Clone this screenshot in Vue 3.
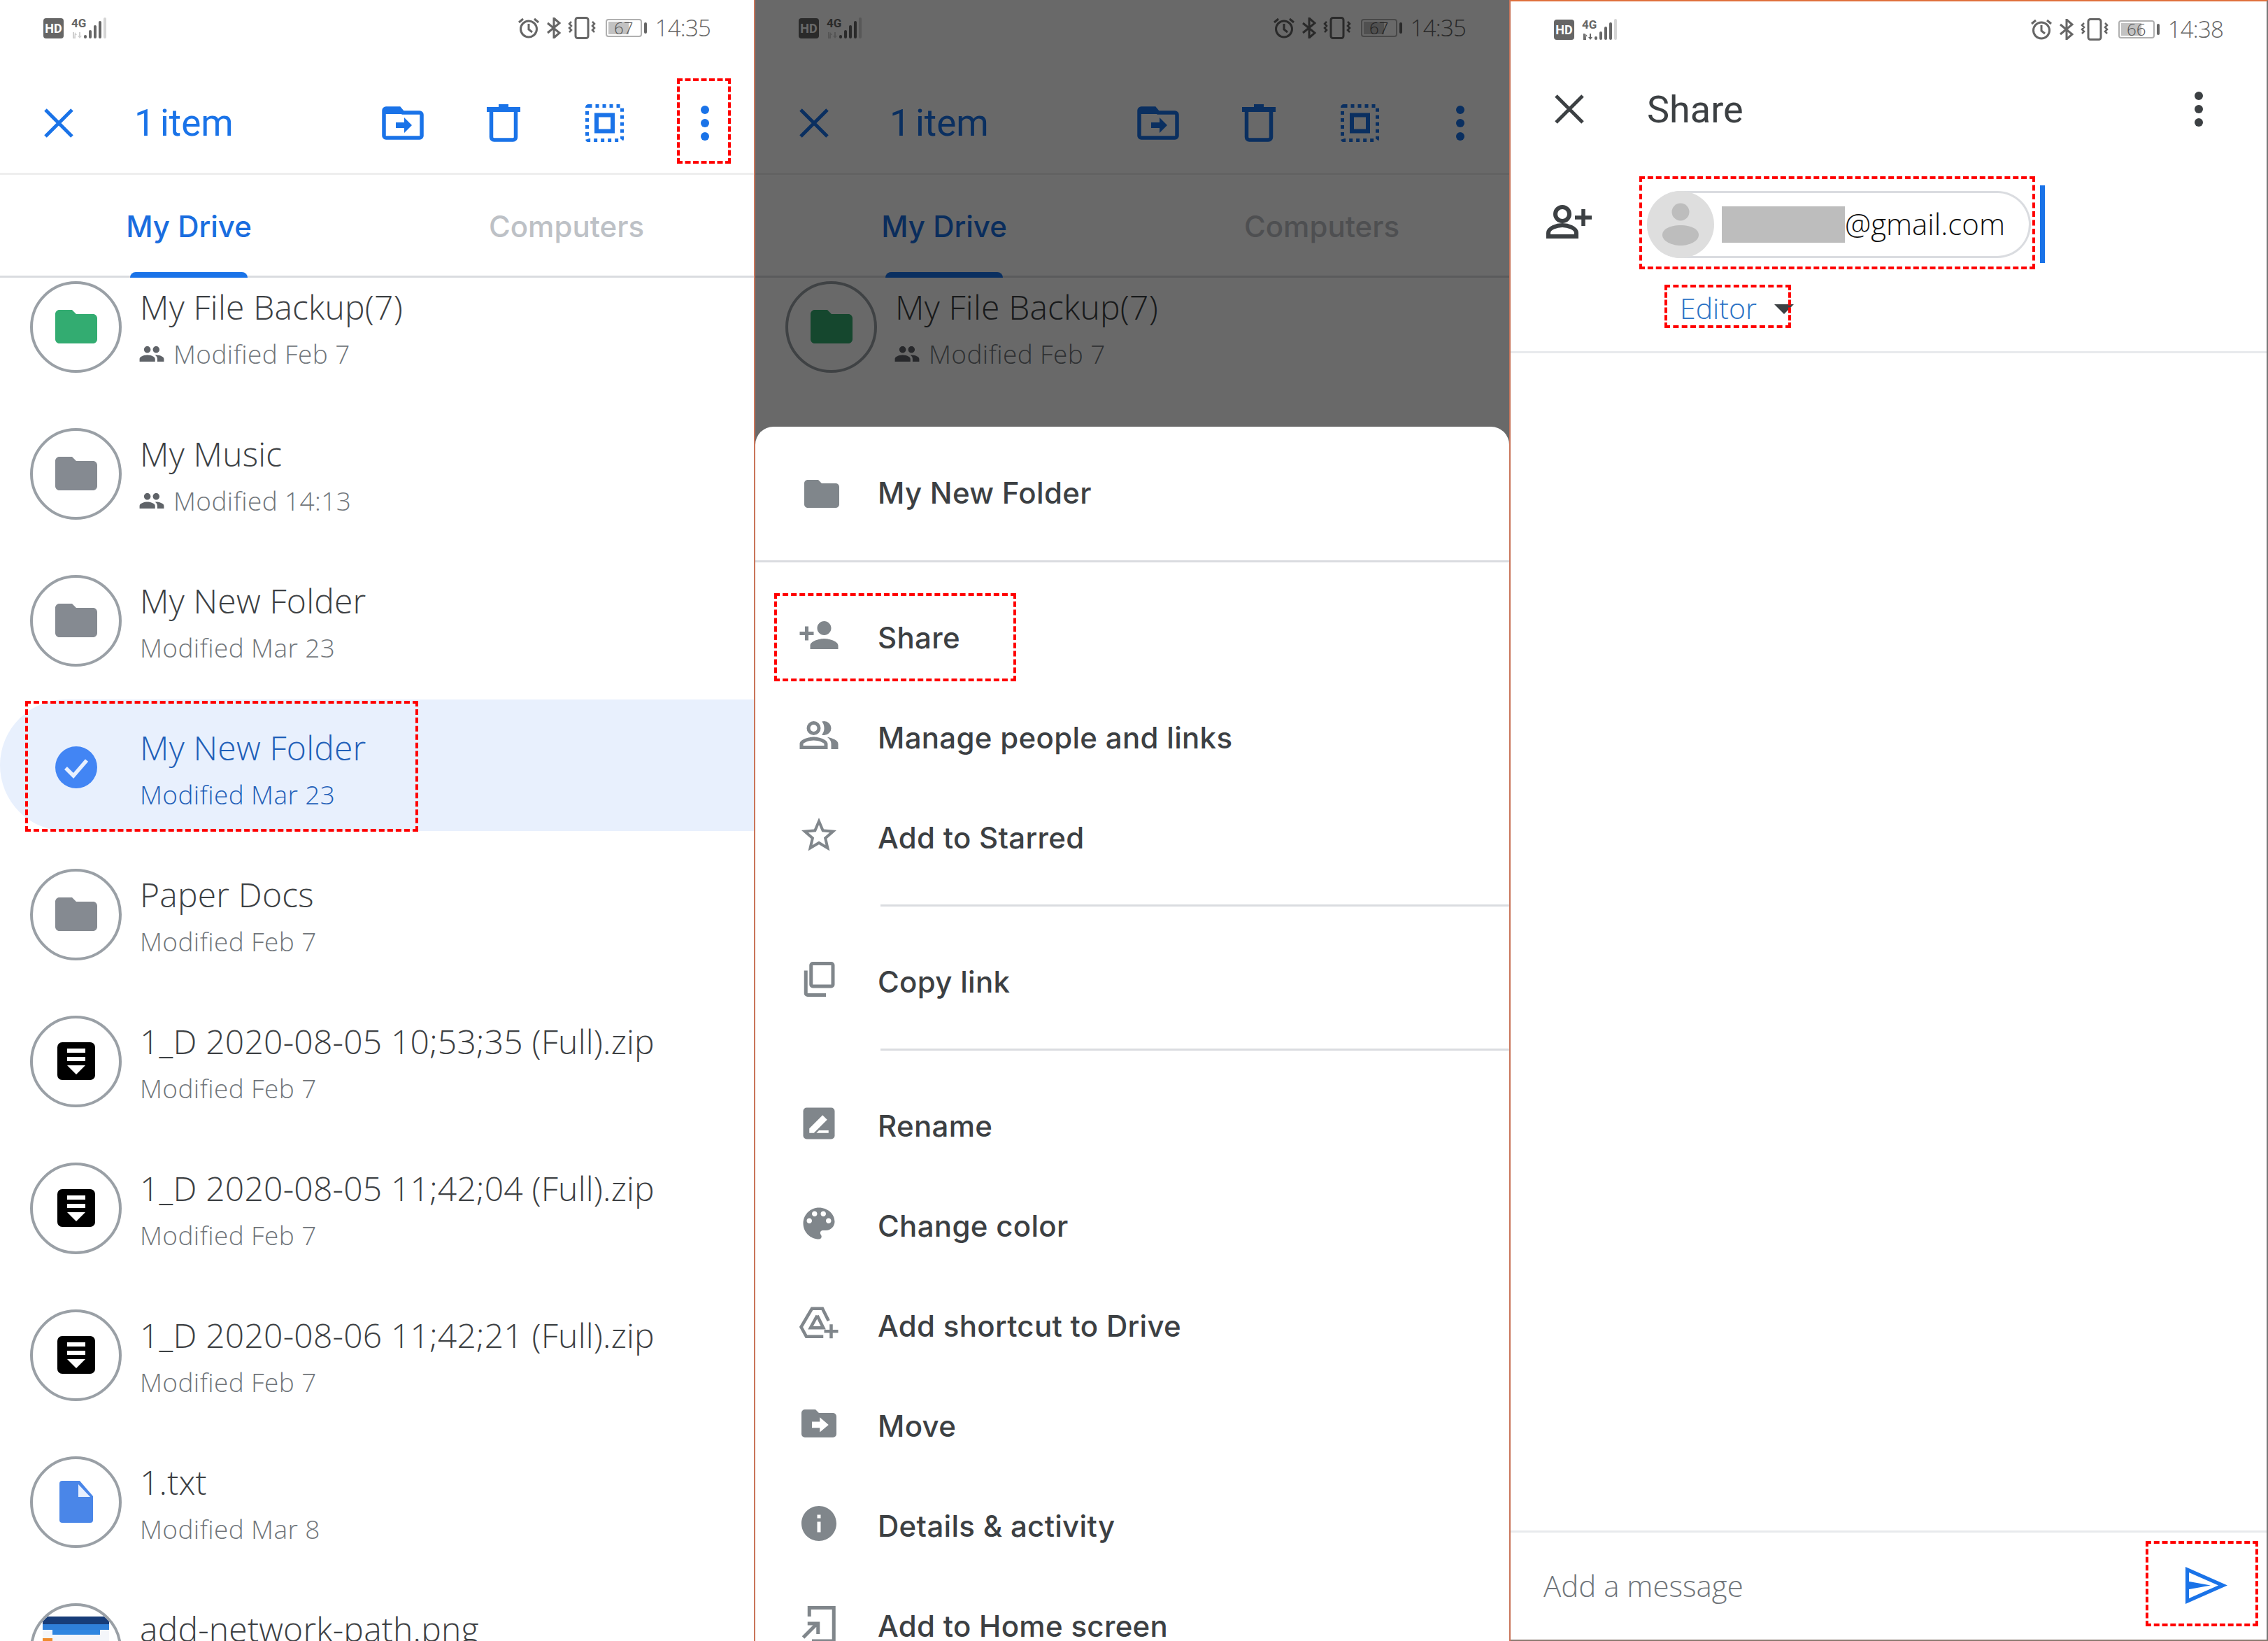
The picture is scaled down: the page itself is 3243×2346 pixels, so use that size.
<script setup>
const panels = [
  { id: 'drive', kind: 'drive', battery: 67, time: '14:35', arrows: '#cfcfcf' },
  { id: 'menu', kind: 'drive', battery: 67, time: '14:35', arrows: '#cfcfcf' },
  { id: 'share', kind: 'share', battery: 66, time: '14:38', arrows: '#666' },
]

const files = [
  { name: 'My File Backup(7)', sub: 'Modified Feb 7', icon: 'folder', tint: 'green', shared: true },
  { name: 'My Music', sub: 'Modified 14:13', icon: 'folder', tint: 'grey', shared: true },
  { name: 'My New Folder', sub: 'Modified Mar 23', icon: 'folder', tint: 'grey' },
  { name: 'My New Folder', sub: 'Modified Mar 23', icon: 'check', selected: true },
  { name: 'Paper Docs', sub: 'Modified Feb 7', icon: 'folder', tint: 'grey' },
  { name: '1_D 2020-08-05 10;53;35 (Full).zip', sub: 'Modified Feb 7', icon: 'zip' },
  { name: '1_D 2020-08-05 11;42;04 (Full).zip', sub: 'Modified Feb 7', icon: 'zip' },
  { name: '1_D 2020-08-06 11;42;21 (Full).zip', sub: 'Modified Feb 7', icon: 'zip' },
  { name: '1.txt', sub: 'Modified Mar 8', icon: 'doc' },
  { name: 'add-network-path.png', sub: '', icon: 'thumb' },
]

const menuGroups = [
  [
    { label: 'Share', icon: 'person-add' },
    { label: 'Manage people and links', icon: 'people' },
    { label: 'Add to Starred', icon: 'star' },
  ],
  [{ label: 'Copy link', icon: 'copy' }],
  [
    { label: 'Rename', icon: 'rename' },
    { label: 'Change color', icon: 'palette' },
    { label: 'Add shortcut to Drive', icon: 'shortcut' },
    { label: 'Move', icon: 'move' },
    { label: 'Details & activity', icon: 'info' },
    { label: 'Add to Home screen', icon: 'home' },
  ],
]

// the sheet covers everything below the first row on the middle panel
const rowsFor = (panel) => (panel.id === 'menu' ? files.slice(0, 1) : files)
</script>

<template>
  <svg class="sprite" aria-hidden="true">
    <symbol id="i-folder" viewBox="0 0 24 24">
      <path fill="currentColor" d="M10 4H4c-1.1 0-2 .9-2 2v12c0 1.1.9 2 2 2h16c1.1 0 2-.9 2-2V8c0-1.100-.9-2-2-2h-8l-2-2z" />
    </symbol>
    <symbol id="i-people-solid" viewBox="0 0 24 24">
      <path fill="currentColor" d="M16 11c1.66 0 2.99-1.34 2.99-3S17.66 5 16 5c-1.66 0-3 1.34-3 3s1.34 3 3 3zm-8 0c1.66 0 2.99-1.34 2.99-3S9.66 5 8 5C6.34 5 5 6.34 5 8s1.34 3 3 3zm0 2c-2.33 0-7 1.17-7 3.5V19h14v-2.5c0-2.33-4.67-3.5-7-3.5zm8 0c-.29 0-.62.02-.97.05 1.16.84 1.97 1.97 1.97 3.45V19h6v-2.5c0-2.33-4.67-3.5-7-3.5z" />
    </symbol>
    <symbol id="i-person-add" viewBox="0 0 24 24">
      <path fill="currentColor" d="M15 12c2.21 0 4-1.79 4-4s-1.79-4-4-4-4 1.79-4 4 1.79 4 4 4zm-9-2V7H4v3H1v2h3v3h2v-3h3v-2H6zm9 4c-2.67 0-8 1.34-8 4v2h16v-2c0-2.66-5.33-4-8-4z" />
    </symbol>
    <symbol id="i-people" viewBox="0 0 24 24">
      <path fill="currentColor" fill-rule="evenodd" d="M9 13c-2.67 0-8 1.34-8 4v3h16v-3c0-2.66-5.33-4-8-4zm6 5H3v-1c.2-.72 3.3-2 6-2s5.8 1.28 6 2v1zM9 12a4 4 0 1 0 0-8 4 4 0 0 0 0 8zm0-6a2 2 0 1 1 0 4 2 2 0 0 1 0-4zm6 6a4 4 0 0 0 0-8c-.47 0-.91.08-1.33.23a5.98 5.98 0 0 1 0 7.54c.42.15.86.23 1.33.23zm1.7 1.13C18.1 14.1 19 15.4 19 17v3h4v-3c0-2.2-3.6-3.4-6.3-3.87z" />
    </symbol>
    <symbol id="i-star" viewBox="0 0 24 24">
      <path fill="currentColor" d="M22 9.24l-7.19-.62L12 2 9.19 8.63 2 9.24l5.46 4.73L5.82 21 12 17.27 18.18 21l-1.63-7.03L22 9.24zM12 15.4l-3.76 2.27 1-4.28-3.32-2.88 4.38-.38L12 6.1l1.71 4.04 4.38.38-3.32 2.88 1 4.28L12 15.4z" />
    </symbol>
    <symbol id="i-copy" viewBox="0 0 24 24">
      <path fill="currentColor" fill-rule="evenodd" d="M8.5 2H19a2 2 0 0 1 2 2v11a2 2 0 0 1-2 2H8.500a2 2 0 0 1-2-2V4a2 2 0 0 1 2-2zm0 2v11H19V4H8.500zM3.500 7h2v13H16v2H5.500a2 2 0 0 1-2-2V7z" />
    </symbol>
    <symbol id="i-rename" viewBox="0 0 24 24">
      <path fill="currentColor" d="M19 3H5a2 2 0 0 0-2 2v14a2 2 0 0 0 2 2h14a2 2 0 0 0 2-2V5a2 2 0 0 0-2-2z" />
      <path fill="#fff" d="M6.500 17.500v-2.600l7.600-7.600 2.600 2.600-7.600 7.600H6.500zM12 16h5.500v1.500H10.500z" />
    </symbol>
    <symbol id="i-palette" viewBox="0 0 24 24">
      <path fill="currentColor" d="M12 3c-4.97 0-9 4.030-9 9s4.030 9 9 9c.83 0 1.500-.67 1.500-1.500 0-.39-.15-.74-.39-1.010-.23-.26-.38-.61-.38-.99 0-.83.67-1.500 1.500-1.500H16c2.760 0 5-2.240 5-5 0-4.420-4.030-8-9-8zm-5.500 9c-.83 0-1.500-.67-1.500-1.500S5.670 9 6.500 9 8 9.670 8 10.500 7.330 12 6.500 12zm3-4C8.670 8 8 7.330 8 6.500S8.670 5 9.500 5s1.500.67 1.500 1.500S10.330 8 9.500 8zm5 0c-.83 0-1.500-.67-1.500-1.500S13.670 5 14.500 5s1.500.67 1.500 1.500S15.330 8 14.500 8zm3 4c-.83 0-1.500-.67-1.500-1.500S16.670 9 17.500 9s1.500.67 1.500 1.500-.67 1.500-1.500 1.500z" />
    </symbol>
    <symbol id="i-shortcut" viewBox="0 0 24 24">
      <path fill="none" stroke="currentColor" stroke-width="1.800" d="M17.500 10.500 14 3.500H8L1.800 14l3 5.500H14.500M11 7.500 7.200 14.500H14.500L11 7.500M19 12.500v8M15 16.500h8" />
    </symbol>
    <symbol id="i-move" viewBox="0 0 24 24">
      <path fill="currentColor" d="M10 4H4a2 2 0 0 0-2 2v12a2 2 0 0 0 2 2h16a2 2 0 0 0 2-2V8a2 2 0 0 0-2-2h-8l-2-2z" />
      <path fill="#fff" d="M12.500 17v-2.500H8v-3.500h4.500V8.500l5 4.250z" />
    </symbol>
    <symbol id="i-info" viewBox="0 0 24 24">
      <path fill="currentColor" d="M12 2C6.480 2 2 6.480 2 12s4.480 10 10 10 10-4.480 10-10S17.520 2 12 2zm1 15h-2v-6h2v6zm0-8h-2V7h2v2z" />
    </symbol>
    <symbol id="i-home" viewBox="0 0 24 24">
      <path fill="none" stroke="currentColor" stroke-width="2" d="M6.500 8V3h14v19H8M3 20l8-8M5.500 12H11.500V18" />
    </symbol>
    <symbol id="i-kebab" viewBox="0 0 12 50">
      <circle cx="6" cy="6" r="6" fill="currentColor" />
      <circle cx="6" cy="25" r="6" fill="currentColor" />
      <circle cx="6" cy="44" r="6" fill="currentColor" />
    </symbol>
    <symbol id="i-close" viewBox="0 0 42 42">
      <path fill="none" stroke="currentColor" stroke-width="5" d="M2 2l38 38M40 2L2 40" />
    </symbol>
  </svg>

  <div class="page">
    <section v-for="panel in panels" :key="panel.id" class="panel" :class="`panel-${panel.id}`">
      <div class="status">
        <svg class="status-left" width="100" height="40" viewBox="60 20 100 40">
          <rect x="62" y="26" width="29" height="29" rx="4" fill="#666" />
          <text x="76.500" y="46.500" class="hd">HD</text>
          <text x="102" y="39" class="net">4G</text>
          <path :fill="panel.arrows" d="M104 46h2v9h-2zM107 46l3 4h-2v5h-2zM113 46h2v5h2l-3 4-3-4h2z" />
          <rect x="120" y="50" width="4" height="5" rx="2" fill="#666" />
          <rect x="127" y="43" width="4" height="12" rx="2" fill="#666" />
          <rect x="134" y="36" width="4" height="19" rx="2" fill="#666" />
          <rect x="141" y="30" width="4" height="25" rx="2" fill="#666" />
          <rect x="148" y="25" width="4" height="30" rx="2" fill="#d5d5d5" />
        </svg>
        <div class="status-right">
          <svg width="32" height="32" viewBox="0 0 32 32" fill="none" stroke="#666" stroke-width="3">
            <circle cx="16" cy="17.500" r="11.500" />
            <path d="M16 10v8l5 4M2 8l6-5M30 8l-6-5" />
          </svg>
          <svg width="20" height="30" viewBox="0 0 20 30" fill="none" stroke="#666" stroke-width="3">
            <path d="M1 8l17 14-8 7V1l8 7L1 22" />
          </svg>
          <svg width="40" height="32" viewBox="0 0 40 32" fill="none" stroke="#666" stroke-width="2.500">
            <rect x="11" y="1.500" width="18" height="29" rx="3" stroke-width="3" />
            <path d="M5 7l-3 3 3 3-3 3 3 3-3 3M35 7l3 3-3 3 3 3-3 3 3 3" />
          </svg>
          <div class="battery">
            <div class="battery-body">
              <span class="battery-fill" :style="{ width: `${panel.battery}%` }"></span>
              <span class="battery-num">{{ panel.battery }}</span>
            </div>
            <span class="battery-nub"></span>
          </div>
          <span class="clock">{{ panel.time }}</span>
        </div>
      </div>

      <template v-if="panel.kind === 'drive'">
        <header class="toolbar">
          <svg class="tool-close" width="42" height="42"><use href="#i-close" /></svg>
          <span class="tool-title">1 item</span>
          <div class="tool-actions">
            <button class="tool-btn">
              <svg width="60" height="48" viewBox="0 0 60 48">
                <path fill="none" stroke="currentColor" stroke-width="5.500" d="M3 6a3 3 0 0 1 3-3h19l5 6h24a3 3 0 0 1 3 3v30a3 3 0 0 1-3 3H6a3 3 0 0 1-3-3z" />
                <path fill="currentColor" d="M3 3h22l6 8H3zM32 16l11 11-11 11v-7H20v-8h12z" />
              </svg>
            </button>
            <button class="tool-btn">
              <svg width="48" height="54" viewBox="0 0 48 54" fill="currentColor">
                <rect x="17" y="0" width="14" height="5" />
                <rect x="0" y="4" width="48" height="7" />
                <path fill="none" stroke="currentColor" stroke-width="5.500" d="M6.500 9v38a4 4 0 0 0 4 4h27a4 4 0 0 0 4-4V9" />
              </svg>
            </button>
            <button class="tool-btn">
              <svg width="55" height="54" viewBox="0 0 55 54" fill="none" stroke="currentColor">
                <rect x="2.500" y="2.500" width="50" height="49" rx="2" stroke-width="5" stroke-dasharray="5 5" />
                <rect x="16" y="15.500" width="23" height="23" stroke-width="6" />
              </svg>
            </button>
            <button class="tool-btn">
              <svg width="12" height="50"><use href="#i-kebab" /></svg>
            </button>
          </div>
          <i v-if="panel.id === 'drive'" class="mark mark-kebab"></i>
        </header>

        <nav class="tabs">
          <div class="tab tab-on">
            <span>My Drive</span>
            <i class="tab-bar"></i>
          </div>
          <div class="tab">Computers</div>
        </nav>

        <div class="list">
          <div v-for="(file, i) in rowsFor(panel)" :key="i" class="row" :class="{ selected: file.selected }">
            <div class="thumb" :class="{ bare: file.selected }">
              <svg v-if="file.icon === 'folder'" class="folder" :class="file.tint" width="72" height="72"><use href="#i-folder" /></svg>
              <svg v-else-if="file.icon === 'check'" width="60" height="60" viewBox="0 0 60 60">
                <circle cx="30" cy="30" r="30" fill="#4285f4" />
                <path fill="none" stroke="#e8f0fe" stroke-width="5.500" d="M15 31l11 11 19-22" />
              </svg>
              <svg v-else-if="file.icon === 'zip'" width="54" height="54" viewBox="0 0 54 54">
                <rect width="54" height="54" rx="7" fill="#000" />
                <path fill="#fff" d="M14 9h26v6H14zM14 21h26v6H14zM14 33h26L27 46z" />
              </svg>
              <svg v-else-if="file.icon === 'doc'" width="48" height="60" viewBox="0 0 48 60">
                <path fill="#4a86e8" d="M4 0h25l19 22v34a4 4 0 0 1-4 4H4a4 4 0 0 1-4-4V4a4 4 0 0 1 4-4z" />
                <path fill="#e8f0fe" d="M27 5v18h17z" />
              </svg>
              <svg v-else class="shot" width="95" height="60" viewBox="0 0 95 60">
                <rect width="95" height="60" fill="#f4f6fa" />
                <rect width="95" height="11" fill="#173c78" />
                <rect y="11" width="95" height="8" fill="#2f7fd8" />
                <rect x="14" y="19" width="68" height="7" fill="#2f86e0" />
                <rect y="31" width="14" height="8" fill="#ef8b2c" />
                <rect x="24" y="40" width="58" height="20" fill="#fff" stroke="#e05555" stroke-width="1" stroke-dasharray="2 1" />
              </svg>
            </div>
            <div class="row-text">
              <div class="row-name">{{ file.name }}</div>
              <div class="row-sub">
                <svg v-if="file.shared" class="row-shared" width="38" height="38"><use href="#i-people-solid" /></svg>
                {{ file.sub }}
              </div>
            </div>
            <i v-if="file.selected && panel.id === 'drive'" class="mark mark-row"></i>
          </div>
        </div>

        <template v-if="panel.id === 'menu'">
          <div class="dim"></div>
          <div class="sheet">
            <div class="sheet-head">
              <svg class="menu-icon" width="60" height="60"><use href="#i-folder" /></svg>
              <span class="menu-label head-label">My New Folder</span>
            </div>
            <div v-for="(group, g) in menuGroups" :key="g" class="menu-group" :class="{ ruled: g < 2 }">
              <div v-for="item in group" :key="item.label" class="menu-item">
                <svg class="menu-icon" width="60" height="60"><use :href="`#i-${item.icon}`" /></svg>
                <span class="menu-label">{{ item.label }}</span>
              </div>
            </div>
            <i class="mark mark-share"></i>
          </div>
        </template>
      </template>

      <template v-else>
        <header class="share-head">
          <svg class="tool-close" width="42" height="42"><use href="#i-close" /></svg>
          <span class="share-title">Share</span>
          <svg class="share-kebab" width="12" height="50"><use href="#i-kebab" /></svg>
        </header>

        <div class="recipient">
          <div class="to-row">
            <svg class="to-icon" width="65" height="48" viewBox="0 0 65 48" fill="none" stroke="currentColor">
              <circle cx="23" cy="13" r="10" stroke-width="6" />
              <path stroke-width="6" d="M3 45v-5c0-7 12-11 20-11s20 4 20 11v5z" />
              <path stroke-width="5.500" d="M53 6v24M41 18h24" />
            </svg>
            <div class="chip">
              <svg class="chip-avatar" width="96" height="96" viewBox="0 0 96 96">
                <circle cx="48" cy="48" r="48" fill="#dedede" />
                <circle cx="48" cy="30" r="12.500" fill="#bdbdbd" />
                <path fill="#bdbdbd" d="M22 63c0-9 12-14 26-14s26 5 26 14-14 15-26 15-26-6-26-15z" />
              </svg>
              <span class="chip-blur"></span>
              <span class="chip-mail">@gmail.com</span>
            </div>
            <span class="caret"></span>
          </div>
          <div class="role">
            <span class="role-name">Editor</span>
            <i class="role-arrow"></i>
          </div>
          <i class="mark mark-chip"></i>
          <i class="mark mark-role"></i>
        </div>

        <div class="share-space"></div>

        <footer class="composer">
          <span class="composer-hint">Add a message</span>
          <svg class="send" width="60" height="53" viewBox="0 0 60 53">
            <path fill="currentColor" fill-rule="evenodd" d="M0 0l60 26.500L0 53zM5 8v37l42-18.500z" />
            <path fill="currentColor" d="M0 20l36 6.500L0 33z" />
          </svg>
          <i class="mark mark-send"></i>
        </footer>
      </template>
    </section>
  </div>
</template>

<style scoped>
.sprite {
  position: absolute;
  width: 0;
  height: 0;
}

.page {
  display: flex;
  width: 3243px;
  height: 2346px;
  overflow: hidden;
  background: #fff;
  font-family: "Open Sans", sans-serif;
}

.panel {
  position: relative;
  display: flex;
  flex-direction: column;
  flex: none;
  width: 1080px;
  height: 2346px;
  box-sizing: border-box;
  overflow: hidden;
  border-right: 2px solid #c9755a;
}

.panel-share {
  width: 1083px;
  border-top: 2px solid #e0703c;
  border-right-color: #777;
  border-bottom: 2px solid #8a7a70;
}

/* status bar */
.status {
  display: flex;
  flex: none;
  align-items: center;
  justify-content: space-between;
  height: 80px;
}

.status-left {
  margin-left: 60px;
}

.hd {
  fill: #fff;
  font: 700 18px "Roboto", sans-serif;
  text-anchor: middle;
}

.net {
  fill: #666;
  font: 700 17px "Roboto", sans-serif;
}

.status-right {
  display: flex;
  align-items: center;
  margin-right: 62px;
  gap: 10px;
}

.battery {
  display: flex;
  align-items: center;
  gap: 3px;
  margin-left: 4px;
}

.battery-body {
  position: relative;
  display: flex;
  width: 52px;
  height: 26px;
  box-sizing: border-box;
  padding: 2px;
  border: 2px solid #b0b0b0;
  border-radius: 4px;
}

.battery-fill {
  background: #c2c2c2;
}

.battery-num {
  position: absolute;
  inset: 0;
  color: #555;
  font: 300 24px/22px "Open Sans", sans-serif;
  text-align: center;
}

.battery-nub {
  width: 4px;
  height: 16px;
  border-radius: 2px;
  background: #666;
}

.clock {
  margin-left: 2px;
  color: #666;
  font-size: 33px;
  font-weight: 300;
  line-height: 40px;
  letter-spacing: -0.8px;
}

/* drive header */
.toolbar {
  position: relative;
  display: flex;
  flex: none;
  align-items: center;
  height: 167px;
  box-sizing: border-box;
  padding: 24px 0 0 63px;
  color: #1a73e8;
}

.tool-close {
  flex: none;
}

.tool-title {
  margin-left: 87px;
  font: 400 53px "Roboto", sans-serif;
  word-spacing: -6px;
}

.tool-actions {
  display: flex;
  margin-left: auto;
  margin-right: -2px;
}

.tool-btn {
  display: flex;
  align-items: center;
  justify-content: center;
  width: 144px;
  padding: 0;
  border: 0;
  background: none;
  color: inherit;
}

.tabs {
  position: relative;
  display: grid;
  flex: none;
  grid-template-columns: 540px 540px;
  height: 150px;
  box-sizing: border-box;
  border-top: 3px solid #eeeeee;
  border-bottom: 3px solid #dadce0;
  color: #bdc1c6;
  font: 500 42px "Inter", sans-serif;
}

.tab {
  position: relative;
  display: flex;
  align-items: center;
  justify-content: center;
  padding-top: 3px;
}

.tab-on {
  color: #1a6ddf;
}

.tab-bar {
  position: absolute;
  left: 186px;
  bottom: -3px;
  width: 168px;
  height: 8px;
  border-radius: 8px 8px 0 0;
  background: #1a73e8;
}

/* file list */
.list {
  flex: 1;
  min-height: 0;
  overflow: hidden;
}

.row {
  position: relative;
  display: flex;
  align-items: center;
  height: 210px;
  padding-left: 43px;
}

.row:first-child {
  margin-top: -35px;
}

.row.selected::before {
  content: "";
  position: absolute;
  top: 8px;
  left: 0;
  right: 0;
  height: 188px;
  border-radius: 94px 0 0 94px;
  background: #e8f0fd;
}

.thumb {
  position: relative;
  display: flex;
  flex: none;
  align-items: center;
  justify-content: center;
  width: 131px;
  height: 131px;
  box-sizing: border-box;
  overflow: hidden;
  border: 4px solid #9aa0a6;
  border-radius: 50%;
}

.thumb.bare {
  border-color: transparent;
}

.folder.green {
  color: #33ac71;
}

.folder.grey {
  color: #858a91;
}

.shot {
  align-self: flex-start;
  margin-top: 15px;
}

.row-text {
  position: relative;
  margin: 4px 0 0 26px;
}

.row-name {
  color: #3c4043;
  font-size: 48px;
  font-weight: 300;
  line-height: 62px;
  letter-spacing: 0.2px;
  white-space: nowrap;
}

.row-sub {
  display: flex;
  align-items: center;
  min-height: 50px;
  margin-top: 11px;
  color: #70757a;
  font-size: 37px;
  font-weight: 300;
  line-height: 50px;
  letter-spacing: 0.4px;
}

.row-shared {
  margin: 0 12px 0 -2px;
  color: #5f6368;
}

.selected .row-name,
.selected .row-sub {
  color: #1f5fb8;
}

/* bottom sheet */
.dim {
  position: absolute;
  inset: 0;
  background: rgba(0, 0, 0, 0.59);
}

.sheet {
  position: absolute;
  top: 610px;
  left: 0;
  right: 0;
  bottom: 0;
  overflow: hidden;
  border-radius: 26px 26px 0 0;
  background: #fff;
}

.sheet-head {
  display: flex;
  align-items: center;
  height: 194px;
  box-sizing: border-box;
  padding-left: 65px;
  border-bottom: 3px solid #dadce0;
}

.menu-group {
  position: relative;
  padding: 37px 0 26px;
}

.menu-group.ruled::after {
  content: "";
  position: absolute;
  left: 179px;
  right: 0;
  bottom: 0;
  height: 3px;
  background: #dadce0;
}

.menu-item {
  display: flex;
  align-items: center;
  height: 143px;
  padding-left: 61px;
}

.menu-icon {
  flex: none;
  color: #80868b;
}

.menu-item .menu-icon {
  margin-bottom: 10px;
}

.menu-label {
  margin: -2px 0 0 54px;
  color: #3c4043;
  font: 500 42px "Inter", sans-serif;
  letter-spacing: 0.3px;
}

.head-label {
  margin-left: 50px;
}

/* share screen */
.share-head {
  display: flex;
  flex: none;
  align-items: center;
  height: 148px;
  padding-left: 63px;
  color: #3c4043;
}

.share-title {
  margin-left: 90px;
  font: 400 54px "Roboto", sans-serif;
}

.share-kebab {
  margin-left: auto;
  margin-right: 91px;
}

.recipient {
  position: relative;
  flex: none;
  height: 275px;
  box-sizing: border-box;
  padding-top: 35px;
  border-bottom: 3px solid #e8eaed;
}

.to-row {
  display: flex;
  align-items: center;
  padding-left: 51px;
}

.to-icon {
  flex: none;
  margin-bottom: 8px;
  color: #3c4043;
}

.chip {
  display: flex;
  align-items: center;
  width: 549px;
  height: 96px;
  box-sizing: border-box;
  margin-left: 79px;
  border: 3px solid #dadce0;
  border-left: 0;
  border-radius: 48px;
}

.chip-avatar {
  flex: none;
  margin: -3px 0;
}

.chip-blur {
  flex: none;
  width: 176px;
  height: 52px;
  margin-left: 11px;
  background: #bdbdbd;
}

.chip-mail {
  margin-top: -2px;
  color: #111;
  font-size: 42px;
  font-weight: 300;
}

.caret {
  flex: none;
  width: 7px;
  height: 111px;
  margin-left: 13px;
  background: #1a73e8;
}

.role {
  display: flex;
  align-items: center;
  height: 44px;
  margin: 42px 0 0 242px;
}

.role-name {
  color: #2a72c5;
  font-size: 41px;
  font-weight: 300;
}

.role-arrow {
  width: 0;
  height: 0;
  margin: 4px 0 0 25px;
  border-top: 14px solid #3c4043;
  border-left: 14px solid transparent;
  border-right: 14px solid transparent;
}

.share-space {
  flex: 1;
}

.composer {
  position: relative;
  display: flex;
  flex: none;
  align-items: center;
  justify-content: space-between;
  height: 156px;
  box-sizing: border-box;
  padding: 0 56px 2px 47px;
  border-top: 3px solid #e8eaed;
}

.composer-hint {
  color: #70757a;
  font-size: 42px;
  font-weight: 300;
}

.send {
  color: #1a73e8;
}

/* red annotation boxes */
.mark {
  position: absolute;
  box-sizing: border-box;
  border: 4px dashed #f00;
  pointer-events: none;
}

.mark-kebab {
  top: 32px;
  left: 968px;
  width: 77px;
  height: 122px;
}

.mark-row {
  top: 10px;
  left: 36px;
  width: 562px;
  height: 187px;
}

.mark-share {
  top: 238px;
  left: 27px;
  width: 346px;
  height: 126px;
}

.mark-chip {
  top: 22px;
  left: 184px;
  width: 566px;
  height: 133px;
}

.mark-role {
  top: 177px;
  left: 220px;
  width: 181px;
  height: 62px;
}

.mark-send {
  top: 12px;
  left: 908px;
  width: 161px;
  height: 122px;
}
</style>

<style>
html,
body {
  margin: 0;
  background: #fff;
}
</style>
